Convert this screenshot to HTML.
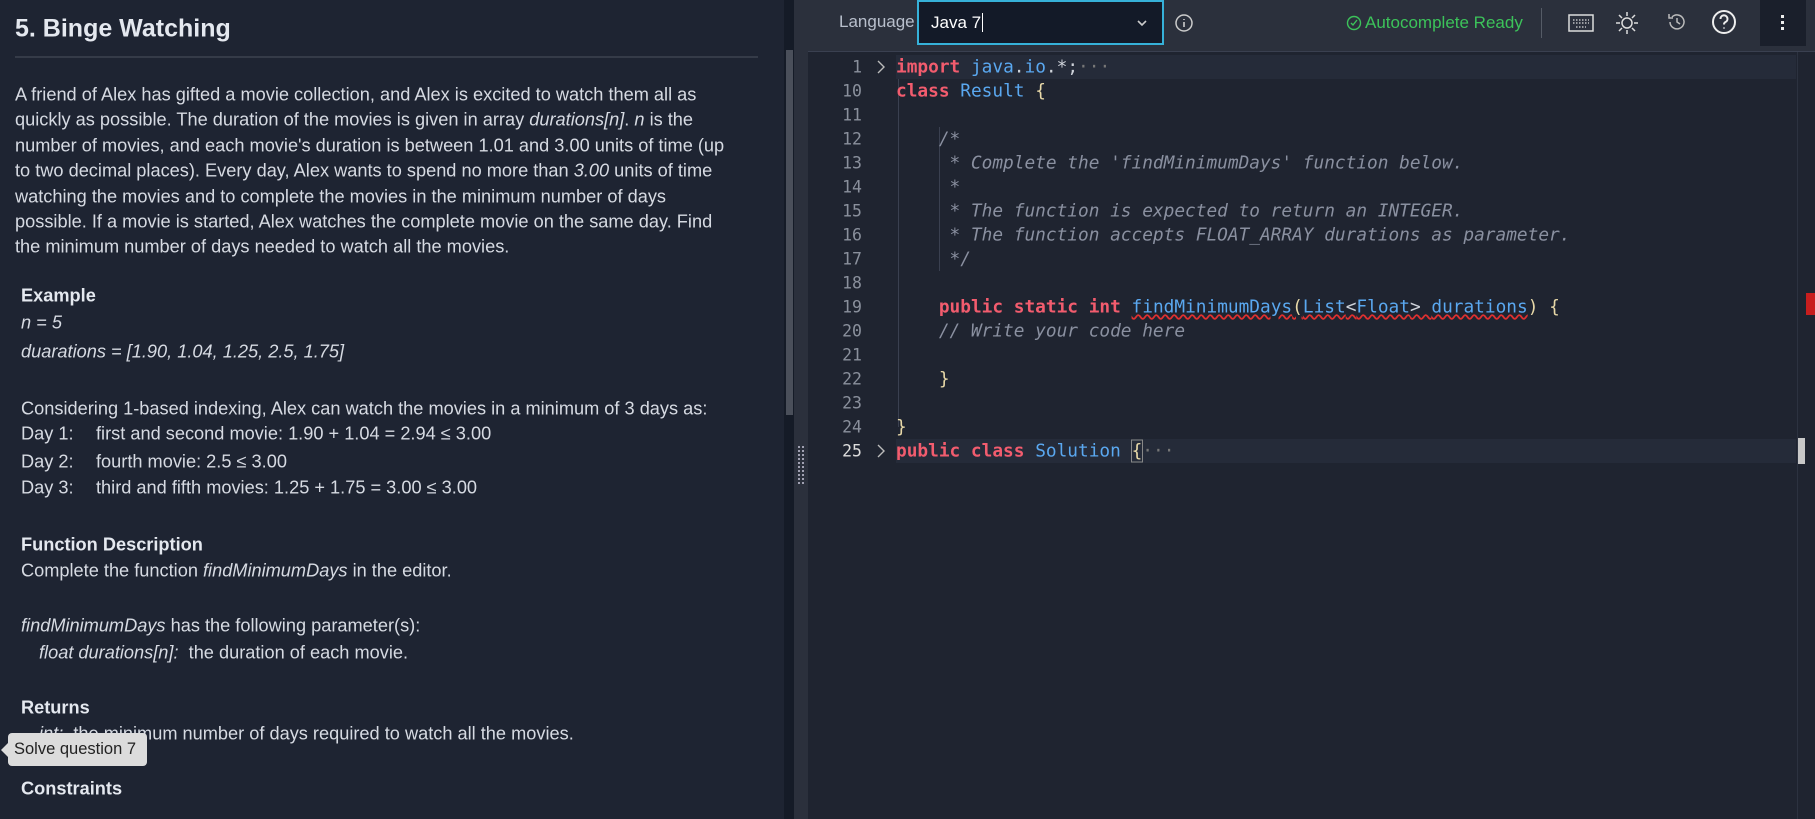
<!DOCTYPE html>
<html><head><meta charset="utf-8"><style>
*{margin:0;padding:0;box-sizing:border-box}
body{width:1815px;height:819px;overflow:hidden;background:#1e2432;font-family:"Liberation Sans",sans-serif;position:relative}
.left{position:absolute;left:0;top:0;width:784px;height:819px;background:#1e2432;color:#d6dae2;font-size:18.2px}
.t{position:absolute;white-space:nowrap;transform:translateY(-50%)}
.h{font-weight:bold;color:#e4e8ef}
i{font-style:italic}
.sb{position:absolute;left:784px;top:0;width:10px;height:819px;background:#151b27}
.thumb{position:absolute;left:786px;top:50px;width:7px;height:365px;background:#4a4f5a}
.div{position:absolute;left:794px;top:0;width:14px;height:819px;background:#2b303c}
.tool{position:absolute;left:808px;top:0;width:1007px;height:52px;background:#2b303c;border-bottom:1px solid #3a4050}
.ed{position:absolute;left:808px;top:52px;width:1007px;height:767px;background:#1f2430;font-family:"DejaVu Sans Mono",monospace;font-size:17.8px}
.ln{position:absolute;left:0;width:54px;text-align:right;color:#8a909c;transform:translateY(-50%);font-size:16.5px}
.cd{position:absolute;left:88px;white-space:pre;color:#cfd3da;transform:translateY(-50%)}
.k{color:#f25c6e;font-weight:bold}.c{color:#5aa8f0}.cm{color:#8a90a0;font-style:italic}.y{color:#e8d9a8}
.hl{position:absolute;left:88px;width:900px;height:24px;background:#252b39}
.fold{position:absolute;left:68px}
</style></head><body>
<div class="left">
<div class="t h" style="left:15px;top:29px;font-size:25px">5. Binge Watching</div>
<div style="position:absolute;left:15px;top:56px;width:743px;height:2px;background:#353b48"></div>
<div class="t" style="left:15px;top:95px">A friend of Alex has gifted a movie collection, and Alex is excited to watch them all as</div>
<div class="t" style="left:15px;top:120px">quickly as possible. The duration of the movies is given in array <i>durations[n]</i>. <i>n</i> is the</div>
<div class="t" style="left:15px;top:146px">number of movies, and each movie's duration is between 1.01 and 3.00 units of time (up</div>
<div class="t" style="left:15px;top:171px">to two decimal places). Every day, Alex wants to spend no more than <i>3.00</i> units of time</div>
<div class="t" style="left:15px;top:197px">watching the movies and to complete the movies in the minimum number of days</div>
<div class="t" style="left:15px;top:222px">possible. If a movie is started, Alex watches the complete movie on the same day. Find</div>
<div class="t" style="left:15px;top:247px">the minimum number of days needed to watch all the movies.</div>
<div class="t h" style="left:21px;top:296px">Example</div>
<div class="t" style="left:21px;top:323px"><i>n = 5</i></div>
<div class="t" style="left:21px;top:352px"><i>duarations = [1.90, 1.04, 1.25, 2.5, 1.75]</i></div>
<div class="t" style="left:21px;top:409px">Considering 1-based indexing, Alex can watch the movies in a minimum of 3 days as:</div>
<div class="t" style="left:21px;top:434px">Day 1:</div><div class="t" style="left:96px;top:434px">first and second movie: 1.90 + 1.04 = 2.94 ≤ 3.00</div>
<div class="t" style="left:21px;top:462px">Day 2:</div><div class="t" style="left:96px;top:462px">fourth movie: 2.5 ≤ 3.00</div>
<div class="t" style="left:21px;top:488px">Day 3:</div><div class="t" style="left:96px;top:488px">third and fifth movies: 1.25 + 1.75 = 3.00 ≤ 3.00</div>
<div class="t h" style="left:21px;top:545px">Function Description</div>
<div class="t" style="left:21px;top:571px">Complete the function <i>findMinimumDays</i> in the editor.</div>
<div class="t" style="left:21px;top:626px"><i>findMinimumDays</i> has the following parameter(s):</div>
<div class="t" style="left:39px;top:653px"><i>float durations[n]:</i>&nbsp; the duration of each movie.</div>
<div class="t h" style="left:21px;top:708px">Returns</div>
<div class="t" style="left:39px;top:734px"><i>int:</i>&nbsp; the minimum number of days required to watch all the movies.</div>
<div class="t h" style="left:21px;top:789px">Constraints</div>
<div style="position:absolute;left:8px;top:733px;width:139px;height:33px;background:#dcdcdc;border-radius:4px;color:#222;font-size:16.5px;line-height:33px;padding-left:6px">Solve question 7</div>
<div style="position:absolute;left:1px;top:742px;width:0;height:0;border-top:8px solid transparent;border-bottom:8px solid transparent;border-right:8px solid #dcdcdc"></div>
</div>
<div class="sb"></div><div class="thumb"></div>
<div class="div"><div style="position:absolute;left:3px;top:445px;width:8px;height:40px;background-image:radial-gradient(#aab 1px,transparent 1.2px);background-size:4px 4px"></div></div>
<div class="tool">
<div class="t" style="left:31px;top:22px;color:#b8bfcc;font-size:17px">Language</div>
<div style="position:absolute;left:109px;top:0;width:247px;height:45px;border:2px solid #36b1d9;background:#131a28"><span class="t" style="left:12px;top:21px;color:#fff;font-size:17px">Java 7<span style="border-left:1px solid #fff;margin-left:1px"></span></span>
<svg style="position:absolute;right:14px;top:16px" width="12" height="10" viewBox="0 0 12 10"><path d="M2 3l4 4 4-4" stroke="#ccc" stroke-width="1.6" fill="none"/></svg></div>
<svg style="position:absolute;left:366px;top:13px" width="20" height="20" viewBox="0 0 20 20"><circle cx="10" cy="10" r="8" stroke="#ccc" stroke-width="1.5" fill="none"/><path d="M10 9v5M10 6v1" stroke="#ccc" stroke-width="1.6"/></svg>
<svg style="position:absolute;left:538px;top:15px" width="16" height="16" viewBox="0 0 16 16"><circle cx="8" cy="8" r="6.5" stroke="#3cc35a" stroke-width="1.4" fill="none"/><path d="M5 8l2 2 4-5" stroke="#3cc35a" stroke-width="1.4" fill="none"/></svg>
<div class="t" style="left:557px;top:23px;color:#3cc35a;font-size:17px">Autocomplete Ready</div>
<div style="position:absolute;left:733px;top:8px;width:1px;height:30px;background:#555b66"></div>
<svg style="position:absolute;left:760px;top:13px" width="26" height="20" viewBox="0 0 26 20"><rect x="1" y="2" width="24" height="16" stroke="#ddd" stroke-width="1.5" fill="none"/><path d="M5 7h16M5 10h16M8 14h10" stroke="#ddd" stroke-width="1.3" stroke-dasharray="1.5 1.5"/></svg>
<svg style="position:absolute;left:806px;top:10px" width="26" height="26" viewBox="0 0 26 26"><circle cx="13" cy="13" r="5" stroke="#ddd" stroke-width="1.5" fill="none"/><path d="M13 2v4M13 20v4M2 13h4M20 13h4M5 5l3 3M18 18l3 3M5 21l3-3M18 8l3-3" stroke="#ddd" stroke-width="1.5"/></svg>
<svg style="position:absolute;left:858px;top:11px" width="22" height="22" viewBox="0 0 22 22"><path d="M4 11a7 7 0 1 0 2-5" stroke="#bbb" stroke-width="1.5" fill="none"/><path d="M3 3v4h4M11 7v4l3 2" stroke="#bbb" stroke-width="1.5" fill="none"/></svg>
<svg style="position:absolute;left:903px;top:9px" width="26" height="26" viewBox="0 0 26 26"><circle cx="13" cy="13" r="11" stroke="#eee" stroke-width="2" fill="none"/><path d="M9.5 10a3.5 3.5 0 1 1 5 3c-1.2.6-1.5 1.3-1.5 2.5M13 18.5v1" stroke="#eee" stroke-width="2" fill="none"/></svg>
<div style="position:absolute;left:952px;top:0;width:46px;height:46px;background:#1a1f2b"><div style="position:absolute;left:21px;top:15px;width:3px;height:3px;background:#eee;box-shadow:0 6px #eee,0 12px #eee"></div></div>
</div>
<div class="ed">
<div class="hl" style="top:3px"></div><div class="hl" style="top:387px"></div>
<div style="position:absolute;left:90px;top:27px;width:1px;height:348px;background:#3a4050"></div>
<div style="position:absolute;left:131px;top:75px;width:1px;height:144px;background:#3a4050"></div>
<svg class="fold" style="top:7px" width="10" height="16" viewBox="0 0 10 16"><path d="M2 2l6 6-6 6" stroke="#bbb" stroke-width="1.4" fill="none"/></svg>
<svg class="fold" style="top:391px" width="10" height="16" viewBox="0 0 10 16"><path d="M2 2l6 6-6 6" stroke="#bbb" stroke-width="1.4" fill="none"/></svg>
<div class="ln" style="top:15px">1</div><div class="cd" style="top:15px"><span class="k">import</span> <span class="c">java</span>.<span class="c">io</span>.*;<span style="color:#777">···</span></div>
<div class="ln" style="top:39px">10</div><div class="cd" style="top:39px"><span class="k">class</span> <span class="c">Result</span> <span class="y">{</span></div>
<div class="ln" style="top:63px">11</div>
<div class="ln" style="top:87px">12</div><div class="cd cm" style="top:87px">    /*</div>
<div class="ln" style="top:111px">13</div><div class="cd cm" style="top:111px">     * Complete the 'findMinimumDays' function below.</div>
<div class="ln" style="top:135px">14</div><div class="cd cm" style="top:135px">     *</div>
<div class="ln" style="top:159px">15</div><div class="cd cm" style="top:159px">     * The function is expected to return an INTEGER.</div>
<div class="ln" style="top:183px">16</div><div class="cd cm" style="top:183px">     * The function accepts FLOAT_ARRAY durations as parameter.</div>
<div class="ln" style="top:207px">17</div><div class="cd cm" style="top:207px">     */</div>
<div class="ln" style="top:231px">18</div>
<div class="ln" style="top:255px">19</div><div class="cd" style="top:255px">    <span class="k">public static int</span> <span class="c" style="text-decoration:underline wavy #e03030">findMinimumDays</span><span class="y" style="text-decoration:underline wavy #e03030">(</span><span class="c" style="text-decoration:underline wavy #e03030">List</span><span style="text-decoration:underline wavy #e03030">&lt;</span><span class="c" style="text-decoration:underline wavy #e03030">Float</span><span style="text-decoration:underline wavy #e03030">&gt; </span><span class="c" style="text-decoration:underline wavy #e03030">durations</span><span class="y">)</span> <span class="y">{</span></div>
<div class="ln" style="top:279px">20</div><div class="cd cm" style="top:279px">    // Write your code here</div>
<div class="ln" style="top:303px">21</div>
<div class="ln" style="top:327px">22</div><div class="cd" style="top:327px">    <span class="y">}</span></div>
<div class="ln" style="top:351px">23</div>
<div class="ln" style="top:375px">24</div><div class="cd" style="top:375px"><span class="y">}</span></div>
<div class="ln" style="top:399px;color:#ddd">25</div><div class="cd" style="top:399px"><span class="k">public class</span> <span class="c">Solution</span> <span class="y" style="outline:1px solid #888">{</span><span style="color:#777">···</span></div>
<div style="position:absolute;left:989px;top:0;width:1px;height:767px;background:#2c3240"></div>
<div style="position:absolute;left:998px;top:241px;width:9px;height:22px;background:#c81e1e"></div>
<div style="position:absolute;left:990px;top:386px;width:7px;height:26px;background:#c8c8c8"></div>
</div>
</body></html>
